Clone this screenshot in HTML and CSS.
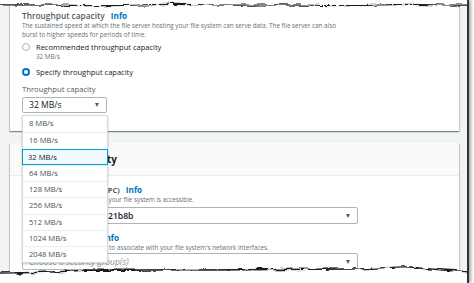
FILE: index.html
```html
<!DOCTYPE html>
<html>
<head>
<meta charset="utf-8">
<link rel="stylesheet" href="styles.css">
</head>
<body>
<div class="shot">
  <section class="card card1">
    <div class="field-label">Throughput capacity <a class="info">Info</a></div>
    <div class="desc">The sustained speed at which the file server hosting your file system can serve data. The file server can also burst to higher speeds for periods of time.</div>
    <div class="radio first"><span class="dot"></span><div class="rtext">Recommended throughput capacity<div class="sub">32 MB/s</div></div></div>
    <div class="radio checked"><span class="dot"></span><div class="rtext">Specify throughput capacity</div></div>
    <div class="sublabel">Throughput capacity</div>
    <div class="select small">
      <span class="val">32 MB/s</span><span class="caret"></span>
      <ul class="menu">
        <li>8 MB/s</li>
        <li>16 MB/s</li>
        <li class="hl">32 MB/s</li>
        <li>64 MB/s</li>
        <li>128 MB/s</li>
        <li>256 MB/s</li>
        <li>512 MB/s</li>
        <li>1024 MB/s</li>
        <li>2048 MB/s</li>
      </ul>
    </div>
  </section>
  <section class="card card2">
    <header class="card-head"><h2>Network &amp; security</h2></header>
    <div class="card-body">
      <div class="field-label compact"><span class="ltext">Virtual Private Cloud (VPC)</span> <a class="info">Info</a></div>
      <div class="desc">Specifies the VPC from which your file system is accessible.</div>
      <div class="select wide"><span class="val strong">vpc-0c6e1d4a7f3e921b8b</span><span class="caret"></span></div>
      <div class="field-label compact gap"><span class="ltext">VPC Security Groups</span> <a class="info">Info</a></div>
      <div class="desc">Specifies VPC security groups to associate with your file system's network interfaces.</div>
      <div class="select wide tight"><span class="val ph">Choose a security group(s)</span><span class="caret"></span></div>
    </div>
  </section>
  <svg class="tear tear-top" width="474" height="14" viewBox="0 0 474 14">
    <defs>
      <filter id="rough1" x="-5%" y="-50%" width="110%" height="200%">
        <feTurbulence type="fractalNoise" baseFrequency="0.09 0.2" numOctaves="3" seed="4"/>
        <feDisplacementMap in="SourceGraphic" scale="5" xChannelSelector="R" yChannelSelector="G"/>
      </filter>
    </defs>
    <g filter="url(#rough1)">
      <path d="M-5 -5 H480 V5 C440 6 420 3 380 5 C340 7 300 4 260 5 C220 6 180 3 140 5 C100 7 60 4 -5 5 Z" fill="#fff" stroke="#1a1a1a" stroke-width="1.2"/>
    </g>
  </svg>
  <svg class="tear tear-bottom" width="474" height="22" viewBox="0 0 474 22">
    <defs>
      <filter id="rough2" x="-5%" y="-50%" width="110%" height="200%">
        <feTurbulence type="fractalNoise" baseFrequency="0.08 0.2" numOctaves="3" seed="9"/>
        <feDisplacementMap in="SourceGraphic" scale="5" xChannelSelector="R" yChannelSelector="G"/>
      </filter>
    </defs>
    <g filter="url(#rough2)">
      <path d="M-5 12 C30 12 60 11 90 9 C130 10 170 8 210 9 C260 9 300 8 350 8 C380 8 395 5 410 6 C430 8 450 10 475 11 V30 H-5 Z" fill="#fff" stroke="#1a1a1a" stroke-width="1.3"/>
    </g>
  </svg>
</div>
</body>
</html>
```

FILE: styles.css
```css
* { box-sizing: border-box; margin: 0; padding: 0; }
html, body { width: 474px; height: 283px; overflow: hidden; background: #fff; }
body { font-family: "Open Sans", "Noto Sans", sans-serif; color: #16191f; position: relative; }

.shot {
  width: 469px;
  height: 283px;
  background: #f2f3f3;
  border-right: 2px solid #333;
  box-shadow: 2px 0 3px rgba(0, 0, 0, .35);
  padding: 0 8px 0 10px;
  position: relative;
  overflow: hidden;
}

.card {
  background: #fff;
  box-shadow: 0 1px 1px 0 rgba(0, 28, 36, .3), 1px 1px 1px 0 rgba(0, 28, 36, .15), -1px 1px 1px 0 rgba(0, 28, 36, .15);
}

.card1 { height: 131px; padding: 11px 12px 0; }
.card2 { margin-top: 12px; height: 200px; }

.field-label { font-size: 8.3px; line-height: 10px; font-weight: 600; color: #545b64; white-space: nowrap; }
.field-label.compact .ltext { font-size: 7.4px; font-weight: 700; }
.field-label.gap { margin-top: 9px; }
.info { color: #0073bb; font-weight: 700; font-size: 8.2px; margin-left: 4px; }

.desc { font-size: 6.3px; line-height: 9px; color: #687078; max-width: 330px; }

.radio { display: flex; align-items: flex-start; margin-top: 3px; }
.radio.checked { margin-top: 6px; }
.dot {
  width: 8px; height: 8px; border-radius: 50%;
  border: 1px solid #aab7b8; background: #fff;
  margin: 1px 6px 0 0; flex: none;
}
.checked .dot { border: 2.5px solid #0073bb; }
.rtext { font-size: 7.5px; line-height: 10px; color: #16191f; }
.sub { font-size: 6.3px; line-height: 9px; color: #687078; }

.sublabel { font-size: 7.7px; line-height: 10px; color: #545b64; margin-top: 7px; }

.select {
  position: relative;
  display: flex; align-items: center; justify-content: space-between;
  border: 1px solid #aab7b8; border-radius: 2px; background: #fff;
  padding: 0 6px;
  font-size: 8.6px; color: #16191f;
}
.select.small { width: 85px; height: 16px; margin-top: 3px; }
.select.wide { width: 336px; height: 17px; margin-top: 3px; }
.select.tight { margin-top: 1px; }
.val.strong { font-weight: 600; }
.val.ph { font-style: italic; color: #879596; }
.caret {
  width: 0; height: 0;
  border-left: 2.8px solid transparent; border-right: 2.8px solid transparent;
  border-top: 4px solid #545b64;
  margin-right: 1px;
}

.menu {
  position: absolute; left: -1px; top: 17px; width: 86px;
  list-style: none; background: #fff;
  border: 1px solid #d5dbdb;
  box-shadow: 0 1px 2px rgba(0, 28, 36, .25);
  z-index: 5;
}
.menu li {
  height: 16.25px; line-height: 15px;
  padding-left: 6px;
  font-size: 7.6px; color: #4b5159;
  border-top: 1px solid #eaeded;
}
.menu li:first-child { border-top: none; }
.menu li.hl { background: #f1faff; border: 1px solid #00a1c9; color: #16191f; padding-left: 5px; margin: 0 -1px; }

.card-head {
  height: 33px; background: #fafafa;
  border-bottom: 1px solid #eaeded;
  display: flex; align-items: center;
  padding: 0 12px;
}
.card-head h2 { font-size: 9.8px; font-weight: 700; color: #16191f; }
.card-body { padding: 9px 12px 0; }

.tear { position: absolute; left: 0; }
.tear-top { top: 0; }
.tear-bottom { top: 261px; }
```
